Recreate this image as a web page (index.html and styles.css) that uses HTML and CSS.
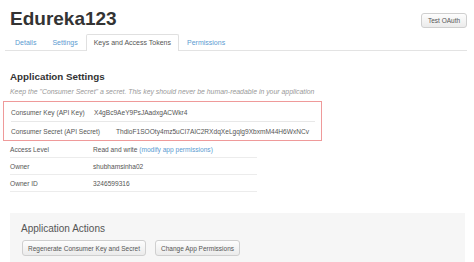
FILE: index.html
```html
<!DOCTYPE html>
<html>
<head>
<meta charset="utf-8">
<link rel="stylesheet" href="styles.css">
</head>
<body>
<div class="page">
  <div class="header">
    <h1 class="title">Edureka123</h1>
    <button class="btn btn-oauth">Test OAuth</button>
  </div>
  <div class="tabs">
    <a class="tab">Details</a>
    <a class="tab">Settings</a>
    <a class="tab active">Keys and Access Tokens</a>
    <a class="tab">Permissions</a>
  </div>

  <h2 class="section-title">Application Settings</h2>
  <p class="hint">Keep the "Consumer Secret" a secret. This key should never be human-readable in your application</p>

  <div class="keys-box">
    <div class="row row-key">
      <span class="label label-key">Consumer Key (API Key)</span>
      <span class="value">X4gBc9AeY9PsJAadxgACWkr4</span>
    </div>
    <div class="row row-secret">
      <span class="label label-secret">Consumer Secret (API Secret)</span>
      <span class="value">ThdioF1SOOty4mz5uCI7AlC2RXdqXeLgqlg9XbxmM44H6WxNCv</span>
    </div>
  </div>

  <div class="info">
    <div class="row info-row">
      <span class="label">Access Level</span>
      <span class="value">Read and write <a class="link">(modify app permissions)</a></span>
    </div>
    <div class="row info-row">
      <span class="label">Owner</span>
      <span class="value">shubhamsinha02</span>
    </div>
    <div class="row info-row">
      <span class="label">Owner ID</span>
      <span class="value">3246599316</span>
    </div>
  </div>

  <div class="actions">
    <h3 class="actions-title">Application Actions</h3>
    <div class="actions-buttons">
      <button class="btn btn-action">Regenerate Consumer Key and Secret</button>
      <button class="btn btn-action">Change App Permissions</button>
    </div>
  </div>
</div>
</body>
</html>
```

FILE: styles.css
```css
* { box-sizing: border-box; }
html, body { margin: 0; padding: 0; background: #fff; }
body {
  font-family: "Liberation Sans", Arial, sans-serif;
  color: #555;
  width: 474px;
  height: 262px;
  overflow: hidden;
}
.page {
  padding: 7px 7px 0 5px;
}
.header {
  display: flex;
  justify-content: space-between;
  align-items: flex-start;
}
.title {
  margin: 0 0 0 5px;
  font-size: 19px;
  font-weight: bold;
  color: #333;
  line-height: 24px;
}
.btn {
  font-family: "Liberation Sans", Arial, sans-serif;
  font-size: 6.5px;
  color: #555;
  background: linear-gradient(#fdfdfd, #ebebeb);
  border: 1px solid #cfcfcf;
  border-radius: 3px;
  padding: 0 6px;
  height: 15px;
  line-height: 13px;
}
.btn-oauth {
  margin-top: 6px;
  width: 46px;
  padding: 0;
}
.tabs {
  display: flex;
  margin-top: 3px;
  padding-left: 2px;
  border-bottom: 1px solid #e3e3e3;
  height: 17px;
}
.tab {
  font-size: 7px;
  color: #5b9bd1;
  padding: 0 7px;
  line-height: 16px;
  height: 17px;
  border: 1px solid transparent;
  border-bottom: none;
}
.tab.active {
  color: #555;
  background: #fff;
  border-color: #e0e0e0;
  border-radius: 2px 2px 0 0;
}
.section-title {
  margin: 19px 0 0 5px;
  font-size: 9.8px;
  font-weight: bold;
  color: #333;
  line-height: 14px;
}
.hint {
  margin: 3px 0 0 5px;
  font-size: 6.9px;
  font-style: italic;
  color: #999;
  line-height: 9px;
}
.keys-box {
  margin: 5px 0 0 -2px;
  width: 319px;
  border: 1.5px solid #ef9a9a;
  padding: 0 6px 0 7px;
}
.row {
  display: flex;
  align-items: center;
  font-size: 6.6px;
  color: #555;
}
.label { flex: none; }
.value { white-space: nowrap; }
.row-key {
  height: 20px;
  border-bottom: 1px solid #e8e8e8;
  padding-top: 1px;
}
.row-secret {
  height: 18px;
}
.label-key { width: 83px; }
.label-secret { width: 105px; }
.info {
  margin-left: 5px;
  width: 247px;
}
.info-row {
  height: 17px;
  border-bottom: 1px solid #ececec;
  padding-top: 1px;
}
.info-row .label { width: 83px; }
.link { color: #5b9bd1; }
.actions {
  margin: 21px 0 0 5px;
  width: 455px;
  background: #f6f6f6;
  padding: 10px 0 8px 11px;
  height: 60px;
}
.actions-title {
  margin: 0;
  font-size: 10px;
  font-weight: normal;
  color: #555;
  line-height: 12px;
}
.actions-buttons {
  display: flex;
  gap: 9px;
  margin-top: 5px;
  margin-left: 1px;
}
.btn-action {
  height: 16px;
  padding: 0 5px;
}
```
